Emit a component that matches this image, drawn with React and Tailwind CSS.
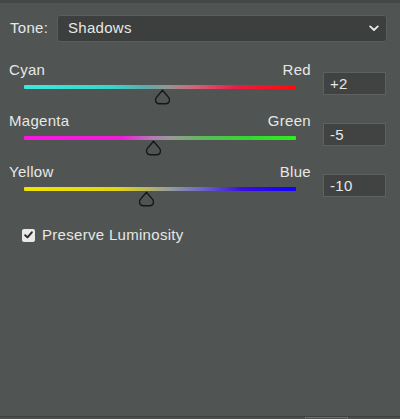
import React from "react";

function Thumb({ pos }) {
  return (
    <svg
      className="absolute top-[4px]"
      style={{ left: `calc(${pos}% - 8.5px)` }}
      width="17"
      height="16"
      viewBox="0 0 17 16"
      fill="none"
    >
      <path
        d="M8.5 1.2 L14.6 8.4 Q16 10.2 15.3 12.3 Q14.4 14.7 11.8 14.7 L5.2 14.7 Q2.6 14.7 1.7 12.3 Q1 10.2 2.4 8.4 Z"
        stroke="#161717"
        strokeWidth="1.4"
        strokeLinejoin="round"
      />
    </svg>
  );
}

function SliderRow({ left, right, value, pos, gradientClass }) {
  return (
    <div className="flex h-[51px]">
      <div className="w-[311px] flex flex-col">
        <div className="flex justify-between pl-[9px] h-[18px] leading-[18px]">
          <span>{left}</span>
          <span>{right}</span>
        </div>
        <div className="relative ml-[24px] w-[272px] mt-[6px] h-[4px]">
          <div className={`h-[4px] w-full rounded-[1px] ${gradientClass}`} />
          <Thumb pos={pos} />
        </div>
      </div>
      <div className="ml-[12px] mt-[11px] w-[63px] h-[23px] bg-[#414343] border border-[#5f6161] flex items-center pl-[6px] leading-none">
        {value}
      </div>
    </div>
  );
}

export default function App() {
  return (
    <div className="w-[400px] h-[419px] bg-[#505452] border-t-[3px] border-[#454847] flex flex-col text-[15px] tracking-[0.3px] text-[#e6e8e7] font-['Liberation_Sans',Arial,sans-serif] overflow-hidden">
      <div className="flex items-center mt-[12px] h-[27px]">
        <span className="pl-[10px] w-[57px]">Tone:</span>
        <div className="w-[330px] h-[27px] bg-[#3d3e3e] border border-[#5a5d5c] rounded-[3px] flex items-center justify-between pl-[10px] pr-[7px]">
          <span>Shadows</span>
          <svg width="10" height="7" viewBox="0 0 10 7" fill="none">
            <path d="M1.2 1.4 L5 5 L8.8 1.4" stroke="#e8e8e8" strokeWidth="1.8" strokeLinecap="round" strokeLinejoin="round" />
          </svg>
        </div>
      </div>
      <div className="mt-[19px] flex flex-col">
        <SliderRow
          left="Cyan"
          right="Red"
          value="+2"
          pos={51}
          gradientClass="bg-[linear-gradient(to_right,#41e6dc_0%,#37d6cd_32%,#5fa9a8_45%,#8e9898_52%,#cf6878_62%,#ea1c44_78%,#ff0a0a_100%)]"
        />
        <SliderRow
          left="Magenta"
          right="Green"
          value="-5"
          pos={47.5}
          gradientClass="bg-[linear-gradient(to_right,#ff14e6_0%,#f01cd8_36%,#b27ab2_47%,#989a98_54%,#5cba5c_66%,#34d830_82%,#2eee1c_100%)]"
        />
        <SliderRow
          left="Yellow"
          right="Blue"
          value="-10"
          pos={45}
          gradientClass="bg-[linear-gradient(to_right,#f2e400_0%,#e4d610_34%,#b8b468_46%,#949aa0_54%,#6a64c8_66%,#3a0ee0_80%,#1000ff_100%)]"
        />
      </div>
      <div className="flex items-center mt-[13px] pl-[22px] h-[16px]">
        <div className="w-[13px] h-[13px] rounded-[2px] bg-[#e9e9e9] flex items-center justify-center">
          <svg width="9" height="8" viewBox="0 0 9 8" fill="none">
            <path d="M1.2 4.2 L3.5 6.4 L7.8 1.3" stroke="#2a2a2a" strokeWidth="2" strokeLinecap="round" strokeLinejoin="round" />
          </svg>
        </div>
        <span className="ml-[7px]">Preserve Luminosity</span>
      </div>
      <div className="flex-1" />
      <div className="h-[3px] border-t border-[#3e4140] bg-[#4a4d4c] flex">
        <div className="ml-[305px] w-[43px] h-[3px] border-t border-l border-r border-[#6a6d6c] bg-[#4e5150]" />
      </div>
    </div>
  );
}
